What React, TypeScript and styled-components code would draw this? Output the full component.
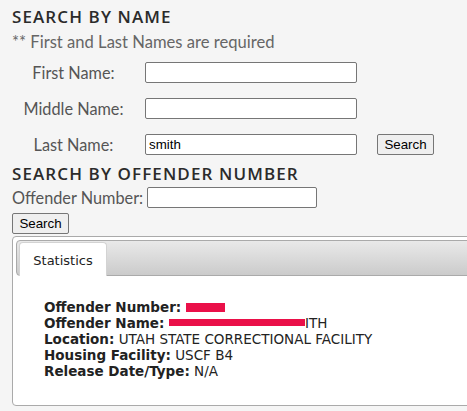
import React from "react";
import styled, { createGlobalStyle } from "styled-components";

const GlobalStyle = createGlobalStyle`
    html, body {
        margin: 0;
        padding: 0;
        background: #f5f5f5;
        overflow: hidden;
    }
`;

const Page = styled.div`
    padding: 7px 0 0 12px;
    font-family: Lato, "Open Sans", sans-serif;
    color: #555;
`;

const Heading = styled.h2`
    margin: 0;
    font-family: "Open Sans", sans-serif;
    font-weight: 600;
    font-size: 17px;
    letter-spacing: 1.1px;
    line-height: 20px;
    color: #2b2b2b;
`;

const Note = styled.div`
    font-size: 16.6px;
    line-height: 20px;
    margin-top: 5px;
    color: #666;
`;

const NameGrid = styled.div`
    display: grid;
    grid-template-columns: 123px 212px auto;
    column-gap: 10px;
    row-gap: 15px;
    align-items: center;
    margin-top: 10px;
`;

const Label = styled.label<{ $align?: string }>`
    font-size: 16.3px;
    color: #555;
    text-align: ${(p) => p.$align || "center"};
`;

const TextInput = styled.input<{ $width: number }>`
    box-sizing: border-box;
    width: ${(p) => p.$width}px;
    height: 21px;
    padding: 1px 3px;
    border: 1px solid #767676;
    border-radius: 2px;
    background: #fff;
    font-family: "Liberation Sans", Arial, sans-serif;
    font-size: 13.33px;
    color: #000;
    outline: none;
`;

const Button = styled.button<{ $ml?: number }>`
    box-sizing: border-box;
    height: 21px;
    width: 57px;
    margin-left: ${(p) => p.$ml || 0}px;
    padding: 0;
    border: 1px solid #767676;
    border-radius: 2px;
    background: #efefef;
    font-family: "Liberation Sans", Arial, sans-serif;
    font-size: 13.33px;
    color: #000;
`;

const Section = styled.div`
    margin-top: 9px;
`;

const OffenderRow = styled.div`
    display: flex;
    align-items: center;
    gap: 4px;
    margin-top: 3px;
`;

const ButtonRow = styled.div`
    margin-top: 5px;
    display: flex;
`;

const Panel = styled.div`
    box-sizing: border-box;
    margin-top: 2px;
    width: 480px;
    height: 170px;
    border: 1px solid #aaa;
    border-radius: 4px;
    background: #fff;
    padding: 3px;
`;

const TabBar = styled.div`
    box-sizing: border-box;
    height: 36px;
    border: 1px solid #aaa;
    border-radius: 4px;
    background: linear-gradient(#e9e9e9, #cbcbcb);
    padding: 2px 0 0 2px;
    display: flex;
    align-items: flex-end;
`;

const Tab = styled.div`
    box-sizing: border-box;
    width: 88px;
    height: 34px;
    margin-bottom: -1px;
    border: 1px solid #d3d3d3;
    border-bottom: none;
    border-radius: 4px 4px 0 0;
    background: #fff;
    font-family: "DejaVu Sans", Verdana, sans-serif;
    font-size: 13px;
    color: #222;
    display: flex;
    align-items: center;
    justify-content: center;
    padding-top: 1px;
`;

const Details = styled.div`
    padding: 23px 0 0 28px;
    font-family: "DejaVu Sans", Verdana, sans-serif;
    font-size: 13.5px;
    line-height: 16px;
    color: #222;
`;

const Line = styled.div`
    white-space: nowrap;
    b {
        font-weight: bold;
    }
`;

const Redacted = styled.span<{ $w: number; $h?: number; $top?: number }>`
    display: inline-block;
    width: ${(p) => p.$w}px;
    height: ${(p) => p.$h || 9}px;
    background: #ea1049;
    vertical-align: ${(p) => p.$top || 0}px;
`;

const App = () => {
    return (
        <>
            <GlobalStyle />
            <Page>
                <Heading>SEARCH BY NAME</Heading>
                <Note>** First and Last Names are required</Note>
                <NameGrid>
                    <Label>First Name:</Label>
                    <TextInput $width={212} />
                    <span />
                    <Label>Middle Name:</Label>
                    <TextInput $width={212} />
                    <span />
                    <Label>Last Name:</Label>
                    <TextInput $width={212} defaultValue="smith" />
                    <Button $ml={10}>Search</Button>
                </NameGrid>
                <Section>
                    <Heading>SEARCH BY OFFENDER NUMBER</Heading>
                    <OffenderRow>
                        <Label $align="left">Offender Number:</Label>
                        <TextInput $width={170} />
                    </OffenderRow>
                    <ButtonRow>
                        <Button>Search</Button>
                    </ButtonRow>
                </Section>
                <Panel>
                    <TabBar>
                        <Tab>Statistics</Tab>
                    </TabBar>
                    <Details>
                        <Line>
                            <b>Offender Number: </b>
                            <Redacted $w={39} />
                        </Line>
                        <Line>
                            <b>Offender Name: </b>
                            <Redacted $w={136} $h={7} $top={2} />
                            ITH
                        </Line>
                        <Line>
                            <b>Location:</b> UTAH STATE CORRECTIONAL FACILITY
                        </Line>
                        <Line>
                            <b>Housing Facility:</b> USCF B4
                        </Line>
                        <Line>
                            <b>Release Date/Type:</b> N/A
                        </Line>
                    </Details>
                </Panel>
            </Page>
        </>
    );
};

export default App;
